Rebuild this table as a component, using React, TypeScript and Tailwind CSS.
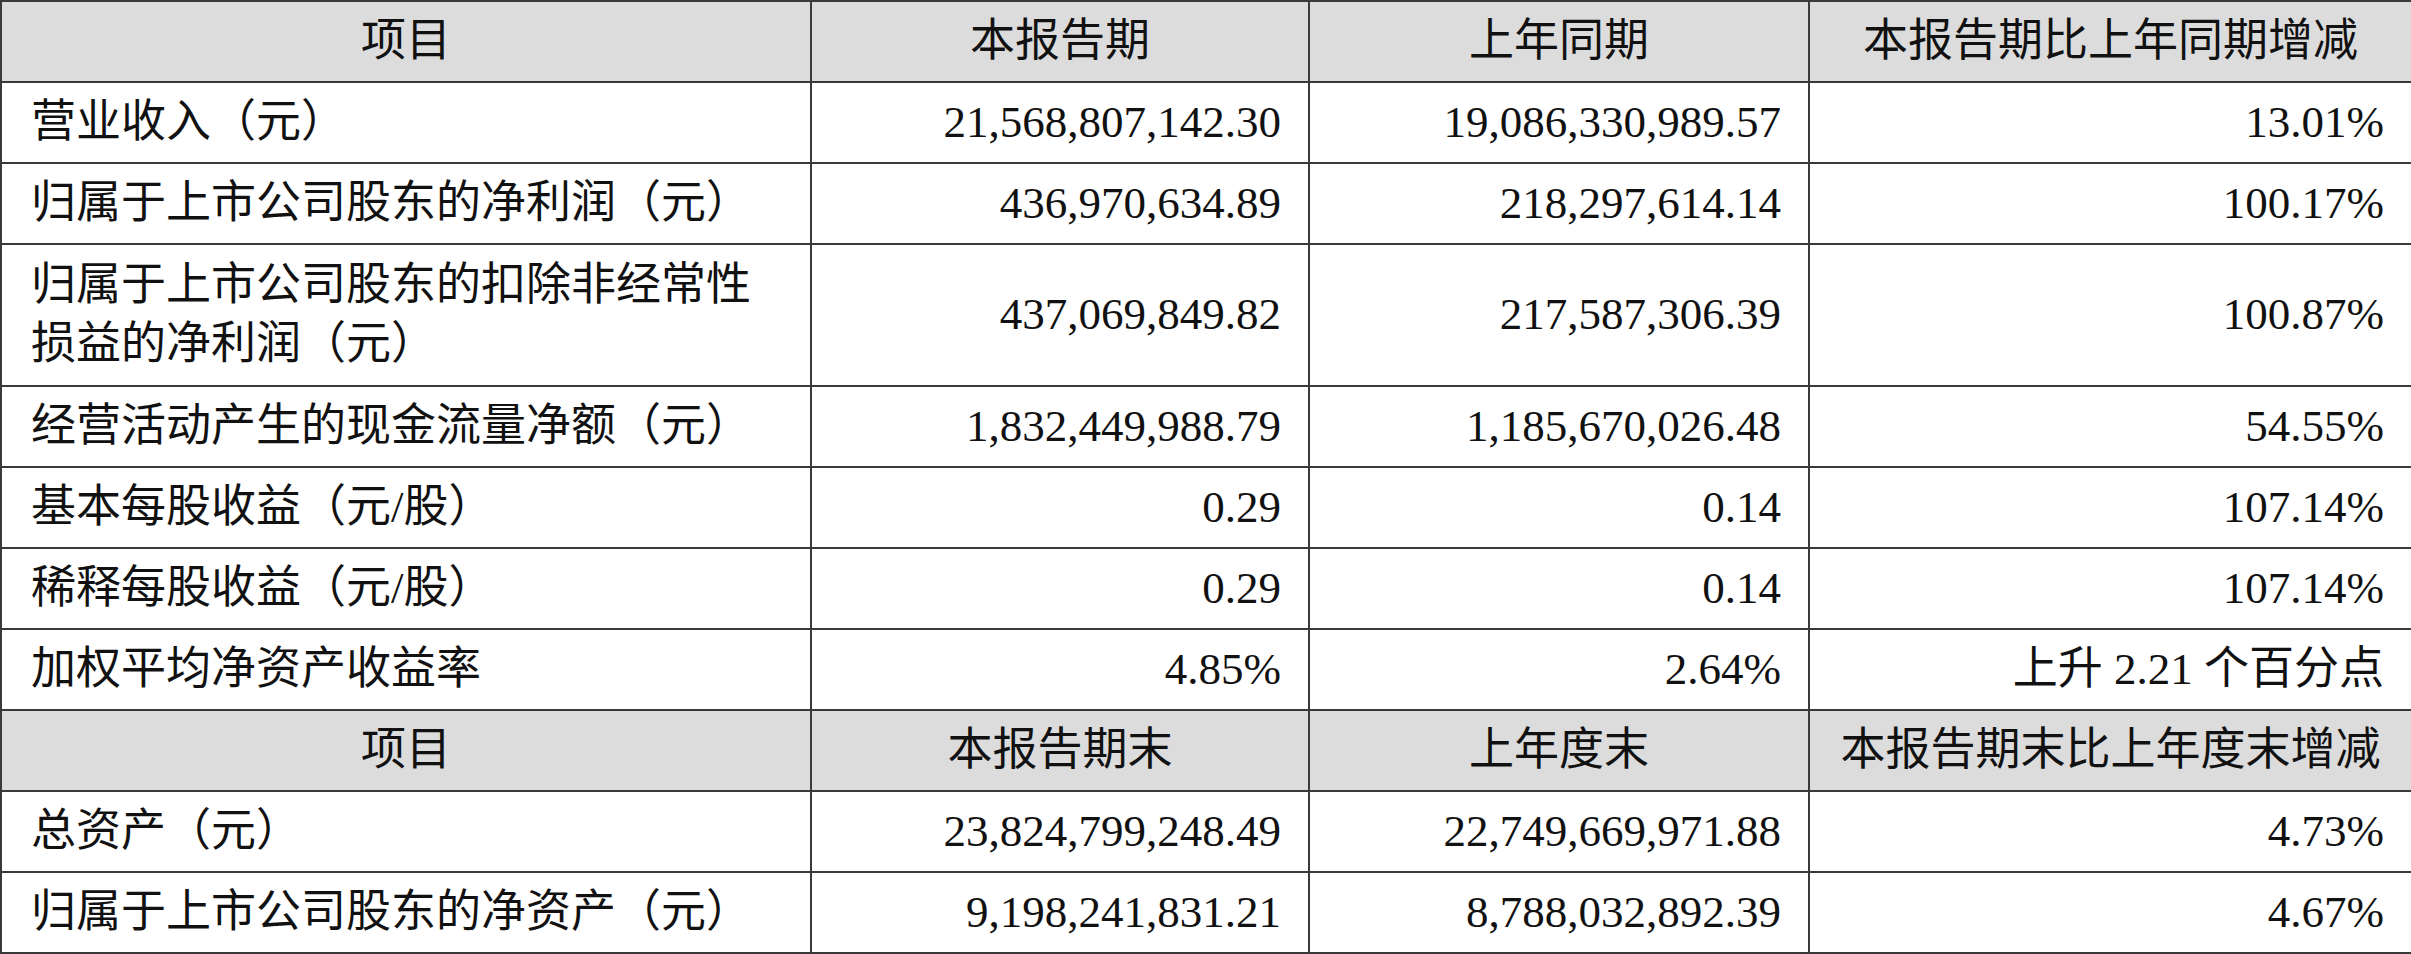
const rows1: [string, string, string, string][] = [
  ["营业收入（元）", "21,568,807,142.30", "19,086,330,989.57", "13.01%"],
  ["归属于上市公司股东的净利润（元）", "436,970,634.89", "218,297,614.14", "100.17%"],
  ["归属于上市公司股东的扣除非经常性\n损益的净利润（元）", "437,069,849.82", "217,587,306.39", "100.87%"],
  ["经营活动产生的现金流量净额（元）", "1,832,449,988.79", "1,185,670,026.48", "54.55%"],
  ["基本每股收益（元/股）", "0.29", "0.14", "107.14%"],
  ["稀释每股收益（元/股）", "0.29", "0.14", "107.14%"],
  ["加权平均净资产收益率", "4.85%", "2.64%", "上升 2.21 个百分点"],
];

const rows2: [string, string, string, string][] = [
  ["总资产（元）", "23,824,799,248.49", "22,749,669,971.88", "4.73%"],
  ["归属于上市公司股东的净资产（元）", "9,198,241,831.21", "8,788,032,892.39", "4.67%"],
];

const HeaderRow = ({ cells }: { cells: string[] }) => (
  <tr className="h-[81px] bg-[#dcdcdc]">
    {cells.map((c, i) => (
      <td key={i} className="border-2 border-[#3a3a3a] text-center align-middle">
        {c}
      </td>
    ))}
  </tr>
);

const DataRow = ({ cells }: { cells: [string, string, string, string] }) => {
  const tall = cells[0].includes("\n");
  return (
    <tr className={tall ? "h-[142px]" : "h-[81px]"}>
      <td className="border-2 border-[#3a3a3a] pl-[29px] pr-2 text-left align-middle whitespace-pre-line leading-[59px]">
        {cells[0]}
      </td>
      {cells.slice(1).map((c, i) => (
        <td key={i} className="border-2 border-[#3a3a3a] pr-[27px] text-right align-middle whitespace-nowrap">
          {c}
        </td>
      ))}
    </tr>
  );
};

export default function App() {
  return (
    <div className="w-[2411px] h-[954px] bg-white overflow-hidden">
      <table className="w-[2411px] table-fixed border-collapse font-['Liberation_Serif','Noto_Sans_CJK_SC',serif] text-[45px] text-[#111]">
        <colgroup>
          <col className="w-[810px]" />
          <col className="w-[498px]" />
          <col className="w-[500px]" />
          <col className="w-[603px]" />
        </colgroup>
        <tbody>
          <HeaderRow cells={["项目", "本报告期", "上年同期", "本报告期比上年同期增减"]} />
          {rows1.map((r, i) => (
            <DataRow key={i} cells={r} />
          ))}
          <HeaderRow cells={["项目", "本报告期末", "上年度末", "本报告期末比上年度末增减"]} />
          {rows2.map((r, i) => (
            <DataRow key={i} cells={r} />
          ))}
        </tbody>
      </table>
    </div>
  );
}
